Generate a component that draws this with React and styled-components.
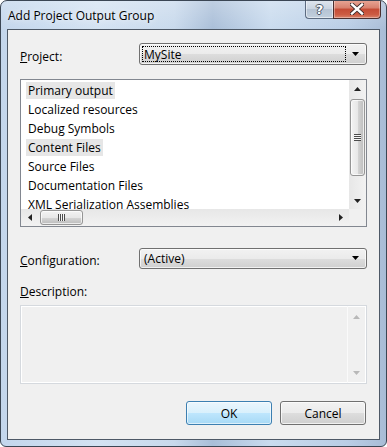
import React from 'react';
import styled, { createGlobalStyle } from 'styled-components';

const outputs = [
  { name: 'Primary output', selected: true },
  { name: 'Localized resources' },
  { name: 'Debug Symbols' },
  { name: 'Content Files', selected: true },
  { name: 'Source Files' },
  { name: 'Documentation Files' },
  { name: 'XML Serialization Assemblies' },
];

const Arrow = ({ dir = 'down', color = '#000' }) => {
  const pts = {
    down: '0,0 7,0 3.5,4',
    up: '0,4 7,4 3.5,0',
    left: '4,0 4,7 0,3.5',
    right: '0,0 0,7 4,3.5',
  }[dir];
  const vertical = dir === 'up' || dir === 'down';
  return (
    <svg width={vertical ? 7 : 4} height={vertical ? 4 : 7} viewBox={vertical ? '0 0 7 4' : '0 0 4 7'}>
      <polygon points={pts} fill={color} />
    </svg>
  );
};

const App = () => {
  return (
    <>
      <GlobalStyle />
      <Window>
        <TitleBar>
          <Title>Add Project Output Group</Title>
          <CaptionButtons>
            <HelpButton>?</HelpButton>
            <CloseButton>
              <svg width="14" height="12" viewBox="0 0 14 12">
                <path d="M2 1.5 L12 10.5 M12 1.5 L2 10.5" stroke="#3b2a2a" strokeWidth="4.2" strokeLinecap="square" />
                <path d="M2 1.5 L12 10.5 M12 1.5 L2 10.5" stroke="#fff" strokeWidth="2.4" strokeLinecap="square" />
              </svg>
            </CloseButton>
          </CaptionButtons>
        </TitleBar>
        <Client>
          <FieldRow>
            <Label><u>P</u>roject:</Label>
            <Combo focused>
              <ComboText focused>MySite</ComboText>
              <ComboArrow><Arrow /></ComboArrow>
            </Combo>
          </FieldRow>

          <ListBox>
            <ListItems>
              {outputs.map((o) => (
                <ListRow key={o.name}>
                  <ItemText selected={o.selected}>{o.name}</ItemText>
                </ListRow>
              ))}
            </ListItems>
            <VScroll>
              <ScrollArrow><Arrow dir="up" color="#222" /></ScrollArrow>
              <VTrack>
                <VThumb>
                  <Grip vertical />
                </VThumb>
              </VTrack>
              <ScrollArrow><Arrow dir="down" color="#222" /></ScrollArrow>
            </VScroll>
            <HScroll>
              <ScrollArrow><Arrow dir="left" color="#222" /></ScrollArrow>
              <HTrack>
                <HThumb>
                  <Grip />
                </HThumb>
              </HTrack>
              <ScrollArrow><Arrow dir="right" color="#222" /></ScrollArrow>
            </HScroll>
            <Corner />
          </ListBox>

          <FieldRow spaced>
            <Label><u>C</u>onfiguration:</Label>
            <Combo>
              <ComboText>(Active)</ComboText>
              <ComboArrow><Arrow /></ComboArrow>
            </Combo>
          </FieldRow>

          <DescLabel><u>D</u>escription:</DescLabel>
          <DescBox>
            <DescText />
            <DescScroll>
              <ScrollArrow><Arrow dir="up" color="#b8b8b8" /></ScrollArrow>
              <ScrollArrow><Arrow dir="down" color="#b8b8b8" /></ScrollArrow>
            </DescScroll>
          </DescBox>

          <ButtonRow>
            <Button primary>OK</Button>
            <Button>Cancel</Button>
          </ButtonRow>
        </Client>
      </Window>
    </>
  );
};

const GlobalStyle = createGlobalStyle`
  html, body {
    margin: 0;
    padding: 0;
    background: #fff;
  }
  body {
    font-family: "Open Sans", "Noto Sans", sans-serif;
    font-size: 12px;
    color: #000;
  }
`;

const Window = styled.div`
  width: 387px;
  height: 447px;
  box-sizing: border-box;
  display: flex;
  flex-direction: column;
  border: 1px solid #3b4654;
  border-radius: 7px 7px 6px 6px;
  overflow: hidden;
  background:
    linear-gradient(to bottom, rgba(255,255,255,0.25), rgba(255,255,255,0) 30px),
    linear-gradient(to right, #c3d6ec 0%, #d3e2f2 25%, #c8d9ec 45%, #a9bed8 55%, #c9dbee 70%, #b9cde5 90%, #a8bcd6 100%);
`;

const TitleBar = styled.div`
  height: 28px;
  display: flex;
  justify-content: space-between;
  align-items: flex-start;
  padding-left: 7px;
  padding-right: 5px;
`;

const Title = styled.div`
  font-size: 12px;
  line-height: 14px;
  padding-top: 8px;
  color: #000;
  text-shadow: 0 0 6px rgba(255,255,255,0.9);
`;

const CaptionButtons = styled.div`
  display: flex;
  margin-top: -1px;
`;

const CaptionButton = styled.div`
  height: 19px;
  box-sizing: border-box;
  display: flex;
  align-items: center;
  justify-content: center;
  border: 1px solid #5c6b80;
  border-top: none;
`;

const HelpButton = styled(CaptionButton)`
  width: 28px;
  border-right: none;
  border-radius: 0 0 0 4px;
  background: linear-gradient(to bottom, #e0e7ef 0%, #c9d4e1 50%, #b5c3d3 51%, #c2cfdd 100%);
  box-shadow: inset 0 0 0 1px rgba(255,255,255,0.5);
  font-family: "DejaVu Sans", sans-serif;
  font-weight: bold;
  font-size: 13px;
  color: #fff;
  text-shadow: 1px 0 0 #4a5566, -1px 0 0 #4a5566, 0 1px 0 #4a5566, 0 -1px 0 #4a5566;
`;

const CloseButton = styled(CaptionButton)`
  width: 48px;
  border-color: #4a2f2f;
  border-radius: 0 0 4px 0;
  background: linear-gradient(to bottom, #e8a898 0%, #d7806d 45%, #c44b35 50%, #cc5b42 80%, #d9826a 100%);
  box-shadow: inset 0 0 0 1px rgba(255,255,255,0.35);
`;

const Client = styled.div`
  flex: 1;
  margin: 0 6px 6px 6px;
  box-sizing: border-box;
  border: 1px solid #4d5866;
  background: #f0f0f0;
  display: flex;
  flex-direction: column;
  padding: 13px 12px 14px 12px;
`;

const FieldRow = styled.div`
  display: flex;
  align-items: center;
  margin-top: ${(p) => (p.spaced ? '20px' : '0')};
`;

const Label = styled.div`
  width: 119px;
  padding-top: ${(p) => (p.top ? p.top : '5px')};
`;

const Combo = styled.div`
  flex: 1;
  height: ${(p) => (p.focused ? '22px' : '21px')};
  box-sizing: border-box;
  border: 1px solid #707070;
  border-radius: 3px;
  display: flex;
  align-items: center;
  padding: 2px;
  background: linear-gradient(to bottom, #f2f2f2 0%, #ebebeb 50%, #dddddd 51%, #cfcfcf 100%);
  box-shadow: inset 0 0 0 1px rgba(255,255,255,0.7);
`;

const ComboText = styled.div`
  flex: 1;
  align-self: stretch;
  display: flex;
  align-items: center;
  padding-left: 2px;
  outline: ${(p) => (p.focused ? '1px dotted #000' : 'none')};
  outline-offset: -1px;
`;

const ComboArrow = styled.div`
  width: 18px;
  display: flex;
  justify-content: center;
  align-items: center;
`;

const ListBox = styled.div`
  margin-top: 14px;
  height: 148px;
  box-sizing: border-box;
  border: 1px solid #828790;
  background: #fff;
  display: grid;
  grid-template-columns: 1fr 17px;
  grid-template-rows: 1fr 17px;
`;

const ListItems = styled.div`
  padding: 1px 0 0 5px;
  overflow: hidden;
`;

const ListRow = styled.div`
  height: 19px;
  display: flex;
  align-items: center;
  white-space: nowrap;
`;

const ItemText = styled.span`
  padding: 0 2px;
  line-height: 17px;
  background: ${(p) => (p.selected ? '#e6e6e6' : 'transparent')};
`;

const VScroll = styled.div`
  display: flex;
  flex-direction: column;
  background: #eaeaea;
  background: linear-gradient(to right, #e7e7e7, #f2f2f2);
`;

const HScroll = styled.div`
  display: flex;
  background: linear-gradient(to bottom, #e7e7e7, #f2f2f2);
`;

const Corner = styled.div`
  background: #f0f0f0;
`;

const ScrollArrow = styled.div`
  width: 17px;
  height: 17px;
  flex-shrink: 0;
  display: flex;
  align-items: center;
  justify-content: center;
`;

const VTrack = styled.div`
  flex: 1;
  padding: 2px 0 0 0;
`;

const VThumb = styled.div`
  margin: 0 1px;
  height: 77px;
  box-sizing: border-box;
  border: 1px solid #959595;
  border-radius: 3px;
  background: linear-gradient(to right, #f3f3f3 0%, #e8e8e8 50%, #d6d6d6 51%, #bcbcbc 100%);
  box-shadow: inset 0 0 0 1px rgba(255,255,255,0.7);
  display: flex;
  align-items: center;
  justify-content: center;
`;

const HTrack = styled.div`
  flex: 1;
  padding-left: 2px;
`;

const HThumb = styled.div`
  margin: 1px 0;
  width: 43px;
  height: 15px;
  box-sizing: border-box;
  border: 1px solid #959595;
  border-radius: 3px;
  background: linear-gradient(to bottom, #f3f3f3 0%, #e8e8e8 50%, #d6d6d6 51%, #bcbcbc 100%);
  box-shadow: inset 0 0 0 1px rgba(255,255,255,0.7);
  display: flex;
  align-items: center;
  justify-content: center;
`;

const Grip = styled.div`
  width: ${(p) => (p.vertical ? '7px' : '7px')};
  height: 7px;
  background: ${(p) =>
    p.vertical
      ? 'repeating-linear-gradient(to bottom, #4c4c4c 0 1px, #f6f6f6 1px 2px)'
      : 'repeating-linear-gradient(to right, #4c4c4c 0 1px, #f6f6f6 1px 2px)'};
`;

const DescLabel = styled.div`
  margin-top: 16px;
  line-height: 14px;
`;

const DescBox = styled.div`
  margin-top: 6px;
  height: 79px;
  box-sizing: border-box;
  border: 1px solid #d5d9de;
  box-shadow: inset 0 0 0 1px #fff;
  background: #f0f0f0;
  display: flex;
`;

const DescText = styled.div`
  flex: 1;
`;

const DescScroll = styled.div`
  width: 17px;
  display: flex;
  flex-direction: column;
  justify-content: space-between;
  padding: 2px 1px 2px 0;
  border-left: 1px solid #fafafa;
`;

const ButtonRow = styled.div`
  margin-top: auto;
  display: flex;
  justify-content: flex-end;
  gap: 8px;
  padding-right: 1px;
`;

const Button = styled.div`
  width: 86px;
  height: 24px;
  box-sizing: border-box;
  border-radius: 3px;
  display: flex;
  align-items: center;
  justify-content: center;
  border: 1px solid ${(p) => (p.primary ? '#3c7fb1' : '#707070')};
  background: ${(p) =>
    p.primary
      ? 'linear-gradient(to bottom, #eaf6fd 0%, #d9f0fc 50%, #bee6fd 51%, #a7d9f5 100%)'
      : 'linear-gradient(to bottom, #f2f2f2 0%, #ebebeb 50%, #dddddd 51%, #cfcfcf 100%)'};
  box-shadow: inset 0 0 0 1px ${(p) => (p.primary ? 'rgba(255,255,255,0.6)' : 'rgba(255,255,255,0.7)')};
`;

export default App;
